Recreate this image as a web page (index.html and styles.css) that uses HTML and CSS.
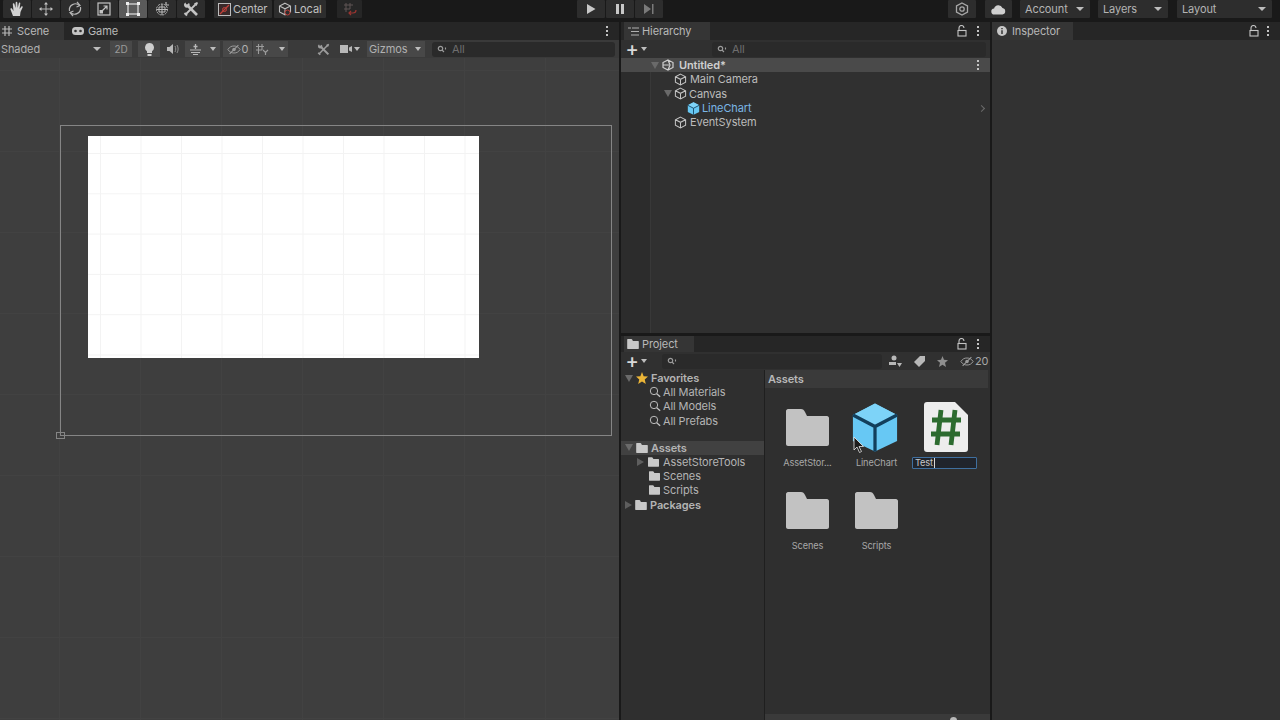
FILE: index.html
```html
<!DOCTYPE html>
<html lang="en">
<head>
  <meta charset="UTF-8" />
  <title>Unity Editor</title>
  <link rel="stylesheet" href="styles.css">
</head>
<body>

  <svg class="defs" width="0" height="0">
    <symbol id="cube" viewBox="0 0 14 14">
      <path d="M7 1.2 12.5 4v6L7 12.8 1.5 10V4zM1.5 4 7 6.8 12.5 4M7 6.8v6" fill="none" stroke="currentColor" stroke-width="1.1"/>
    </symbol>
    <symbol id="blue-cube" viewBox="0 0 50 52">
      <path d="M25 1 48 13v27L25 51 2 40V13z" fill="#67c8f4"/>
      <path d="M25 1 48 13 25 25 2 13z" fill="#7dd3f8"/>
      <path d="M2 13 25 25 48 13M25 25v26" fill="none" stroke="#123f5c" stroke-width="3.4"/>
    </symbol>
    <symbol id="folder" viewBox="0 0 43 37">
      <path d="M2 0h13c2 0 3 1 4 3l2 4h20c1 0 2 1 2 2v26c0 1-1 2-2 2H2c-1 0-2-1-2-2V2C0 1 1 0 2 0z" fill="currentColor"/>
    </symbol>
    <symbol id="search" viewBox="0 0 14 14">
      <circle cx="5.8" cy="5.8" r="4.3" fill="none" stroke="currentColor" stroke-width="1.1"/>
      <path d="M9 9l4 3.6" stroke="currentColor" stroke-width="1.4"/>
    </symbol>
    <symbol id="mini-search" viewBox="0 0 10 8">
      <circle cx="3.5" cy="3.5" r="2.2" fill="none" stroke="currentColor" stroke-width="1.2"/>
      <path d="M5 5l2 2M8.5 2.5v2" stroke="currentColor" stroke-width="1.1"/>
    </symbol>
    <symbol id="lock" viewBox="0 0 10 12">
      <path d="M2 5V3a2.5 2.5 0 0 1 5 0" fill="none" stroke="currentColor" stroke-width="1.1"/>
      <rect x="1" y="5.5" width="8" height="5.5" fill="none" stroke="currentColor" stroke-width="1.1"/>
    </symbol>
    <symbol id="eye" viewBox="0 0 16 12">
      <path d="M1 6c2-3 4-4 7-4s5 1 7 4c-2 3-4 4-7 4S3 9 1 6z" fill="none" stroke="currentColor" stroke-width="1.1"/>
      <circle cx="8" cy="6" r="2" fill="currentColor"/>
      <path d="M3 11 13 1" stroke="currentColor" stroke-width="1.2"/>
    </symbol>
    <symbol id="crosstool" viewBox="0 0 16 16">
      <path d="M5 5 14 14" stroke="currentColor" stroke-width="2.6"/>
      <path d="M2.5 1.5A3 3 0 0 0 1.5 5.5 3 3 0 0 0 5.5 6 3 3 0 0 0 6 2L4 3.5 3 3z" fill="currentColor"/>
      <path d="M12.5 3.5 3 13" stroke="currentColor" stroke-width="1.8"/>
      <path d="M11 2.5 14 1l1 1-1.5 3z" fill="currentColor"/>
      <path d="M1.5 12 4 14.5" stroke="currentColor" stroke-width="2"/>
    </symbol>
    <symbol id="hash-grid" viewBox="0 0 14 12">
      <path d="M1 3.5h8M1 7h6M3.5 1v10M7 1v6" stroke="currentColor" stroke-width="1.1" fill="none"/>
      <path d="M8 7l2.5 2.5L13 7M10.5 9.5V12" stroke="currentColor" stroke-width="1.2" fill="none"/>
    </symbol>
  </svg>

  <header class="toolbar">
    <div class="tool-group">
      <button class="tool">
        <svg width="16" height="16" viewBox="0 0 16 16"><path d="M4 15 1.5 8.5c-.4-1 1-1.600 1.600-.7L4.500 10 3.800 3c-.1-1 1.400-1.200 1.600-.2L6.500 7 6.700 1.400c0-1 1.500-1 1.600 0L8.700 7l1.100-4.800c.2-1 1.700-.7 1.500.3L10.500 8l1.700-2.300c.6-.8 1.900-.1 1.400.8L11.500 11 11 15z" fill="#d2d2d2"/></svg>
      </button>
      <button class="tool">
        <svg width="16" height="16" viewBox="0 0 16 16"><path d="M8 3v10M3 8h10" stroke="#b4b4b4" stroke-width="1"/><path d="M8 1 6 3.5h4zM8 15l-2-2.500h4zM1 8l2.500-2v4zM15 8l-2.500-2v4z" fill="#c4c4c4"/></svg>
      </button>
      <button class="tool">
        <svg width="16" height="16" viewBox="0 0 16 16" fill="none" stroke="#b5b5b5" stroke-width="1.2"><path d="M12.5 4.5A6 6 0 0 0 2.500 10M3.500 11.500a6 6 0 0 0 10-5.500"/><path d="M10 1l3 3.500L9.500 6M6 15l-3-3.500L6.500 10"/></svg>
      </button>
      <button class="tool">
        <svg width="14" height="14" viewBox="0 0 14 14" fill="none" stroke="#c4c4c4" stroke-width="1.2"><rect x="1" y="1" width="12" height="12"/><path d="M5 9 10 4M6.500 4H10v3.500"/><rect x="2.5" y="8" width="3.5" height="3.5" fill="#c4c4c4" stroke="none"/></svg>
      </button>
      <button class="tool tool-on">
        <svg width="14" height="14" viewBox="0 0 14 14"><rect x="2" y="2" width="10" height="10" fill="none" stroke="#eee" stroke-width="1.1"/><path d="M0 0h3v3H0zM11 0h3v3h-3zM0 11h3v3H0zM11 11h3v3h-3z" fill="#eee"/></svg>
      </button>
      <button class="tool">
        <svg width="16" height="16" viewBox="0 0 16 16" fill="none" stroke="#bcbcbc"><circle cx="8" cy="8.5" r="5.5" stroke-dasharray="2 1"/><path d="M8 3v11M2.500 8.500h11"/><path d="M5 6h6v5H5z"/><path d="M12 1v3h3" stroke-width="1.2"/></svg>
      </button>
      <button class="tool">
        <svg class="ico-light" width="16" height="16"><use href="#crosstool"/></svg>
      </button>
    </div>

    <div class="tool-group pivot-group">
      <button class="tool tool-text">
        <svg width="13" height="13" viewBox="0 0 13 13"><rect x=".5" y=".5" width="12" height="12" fill="#3a2a2a" stroke="#bdbdbd"/><path d="M2 11 11 2" stroke="#c0403a" stroke-width="1.3"/><circle cx="6.5" cy="6.5" r="2" fill="none" stroke="#c0403a"/></svg>
        Center
      </button>
      <button class="tool tool-text">
        <svg width="14" height="14" viewBox="0 0 14 14"><use href="#cube" color="#bdbdbd"/><circle cx="9.5" cy="10.5" r="2.5" fill="#2e2e2e" stroke="#c0403a"/></svg>
        Local
      </button>
    </div>

    <button class="tool snap">
      <svg width="14" height="14" viewBox="0 0 14 14" fill="none"><path d="M3 1v9M7 1v6M1 3h9M1 7h6" stroke="#5f5555"/><path d="M13 8a3 3 0 0 1-3 3H6M8 9l-2 2 2 2" stroke="#9a3430" stroke-width="1.2"/></svg>
    </button>

    <div class="play-group">
      <button class="tool"><svg width="10" height="10" viewBox="0 0 10 10"><path d="M1 0 9.5 5 1 10z" fill="#c8c8c8"/></svg></button>
      <button class="tool"><svg width="10" height="10" viewBox="0 0 10 10"><path d="M1 0h3v10H1zM6 0h3v10H6z" fill="#c8c8c8"/></svg></button>
      <button class="tool"><svg width="10" height="10" viewBox="0 0 10 10"><path d="M0 0 7 5 0 10zM8 0h1.500v10H8z" fill="#7a7a7a"/></svg></button>
    </div>

    <div class="right-group">
      <button class="tool">
        <svg width="14" height="14" viewBox="0 0 14 14" fill="none" stroke="#a8a8a8" stroke-width="1.3"><path d="M7 1 12.5 4v6L7 13 1.5 10V4z"/><circle cx="7" cy="7" r="2.2"/></svg>
      </button>
      <button class="tool">
        <svg width="15" height="11" viewBox="0 0 15 11"><path d="M3.500 10.500a3 3 0 0 1-.4-6A4.500 4.500 0 0 1 11.500 4a3.300 3.300 0 0 1 0 6.500z" fill="#d0d0d0"/></svg>
      </button>
      <button class="drop drop-account">Account<i class="caret"></i></button>
      <button class="drop drop-layers">Layers<i class="caret"></i></button>
      <button class="drop drop-layout">Layout<i class="caret"></i></button>
    </div>
  </header>

  <main class="editor">

    <section class="scene-panel">
      <div class="tabs">
        <div class="tab tab-on tab-scene">
          <svg width="10" height="10" viewBox="0 0 10 10"><path d="M3 0v10M7 0v10M0 3h10M0 7h10" stroke="#b8b8b8" stroke-width="1.2"/></svg>
          Scene
        </div>
        <div class="tab">
          <svg width="12" height="8" viewBox="0 0 12 8"><rect y="0" width="12" height="8" rx="3.5" fill="#c4c4c4"/><circle cx="3.5" cy="4" r="1.3" fill="#333"/><circle cx="8.5" cy="4" r="1.3" fill="#333"/></svg>
          Game
        </div>
        <span class="kebab tabs-kebab"></span>
      </div>

      <div class="scene-tools">
        <div class="shaded">Shaded<i class="caret"></i></div>
        <span class="st-btn st-2d">2D</span>
        <span class="st-btn st-light"><svg width="9" height="13" viewBox="0 0 9 13"><path d="M4.500 0a4.500 4.500 0 0 1 2.500 8.200V10H2V8.200A4.500 4.500 0 0 1 4.500 0zM2.500 11h4v2h-4z" fill="#cfcfcf"/></svg></span>
        <span class="st-btn st-audio"><svg width="12" height="10" viewBox="0 0 12 10"><path d="M0 3h2.500L6 0v10L2.500 7H0z" fill="#b8b8b8"/><path d="M8 2c1 2 1 4 0 6M10 1c1.500 2.500 1.500 5.500 0 8" stroke="#8c8c8c" fill="none"/></svg></span>
        <span class="st-btn st-fx">
          <svg width="13" height="11" viewBox="0 0 13 11"><path d="M1 6h11M2 8.500h9M4 10.500h5" stroke="#b8b8b8"/><path d="M6.500 0v5M4.500 2.500h4" stroke="#b8b8b8" stroke-width="1.3"/></svg>
          <i class="caret"></i>
        </span>
        <span class="st-btn st-hidden"><svg class="ico-mid" width="14" height="11"><use href="#eye"/></svg>0</span>
        <span class="st-btn st-grid">
          <svg class="ico-mid" width="14" height="12"><use href="#hash-grid"/></svg>
          <i class="caret"></i>
        </span>
        <span class="st-btn st-cross"><svg class="ico-mid" width="13" height="13"><use href="#crosstool"/></svg></span>
        <span class="st-btn st-cam">
          <svg width="12" height="8" viewBox="0 0 12 8"><path d="M0 0h8v8H0zM9 2.500 12 1v6L9 5.500z" fill="#b8b8b8"/></svg>
          <i class="caret"></i>
        </span>
        <span class="st-btn st-gizmos">Gizmos<i class="caret"></i></span>
        <div class="search scene-search">
          <svg class="ico-mid" width="10" height="8"><use href="#mini-search"/></svg>
          All
        </div>
      </div>

      <div class="viewport">
        <div class="canvas-frame"></div>
        <div class="game-rect"></div>
      </div>
    </section>

    <div class="middle-col">
      <section class="hierarchy-panel">
        <div class="tabs">
          <div class="tab tab-on tab-hier">
            <svg width="11" height="9" viewBox="0 0 11 9"><path d="M0 1h3M4 1h7M3 4.500h8M3 8h8" stroke="#b0b0b0"/></svg>
            Hierarchy
          </div>
          <svg class="ico-light tab-lock" width="10" height="12"><use href="#lock"/></svg>
          <span class="kebab"></span>
        </div>
        <div class="panel-tools">
          <span class="plus">+</span><i class="caret"></i>
          <div class="search hier-search">
            <svg class="ico-mid" width="10" height="8"><use href="#mini-search"/></svg>
            All
          </div>
        </div>
        <div class="tree">
          <div class="tree-row scene-row">
            <i class="arrow-down dim"></i>
            <svg width="12" height="12" viewBox="0 0 12 12" fill="none" stroke="#d0d0d0" stroke-width="1.2"><path d="M6 1 11 3.500v5L6 11 1 8.500v-5zM1 6h6M6 1l2 5-2 5"/></svg>
            <b>Untitled*</b>
            <span class="kebab row-kebab"></span>
          </div>
          <div class="tree-row depth-1"><svg class="ico-light" width="13" height="13"><use href="#cube"/></svg>Main Camera</div>
          <div class="tree-row depth-1 has-arrow"><i class="arrow-down dim"></i><svg class="ico-light" width="13" height="13"><use href="#cube"/></svg>Canvas</div>
          <div class="tree-row depth-2 prefab">
            <svg width="13" height="13" viewBox="0 0 50 52"><use href="#blue-cube"/></svg>LineChart
            <span class="chev"></span>
          </div>
          <div class="tree-row depth-1"><svg class="ico-light" width="13" height="13"><use href="#cube"/></svg>EventSystem</div>
        </div>
      </section>

      <section class="project-panel">
        <div class="tabs">
          <div class="tab tab-on tab-project">
            <svg class="ico-folder" width="12" height="10"><use href="#folder"/></svg>
            Project
          </div>
          <svg class="ico-light tab-lock" width="10" height="12"><use href="#lock"/></svg>
          <span class="kebab"></span>
        </div>
        <div class="panel-tools">
          <span class="plus">+</span><i class="caret"></i>
          <div class="search project-search">
            <svg class="ico-mid" width="10" height="8"><use href="#mini-search"/></svg>
          </div>
          <div class="filter-icons">
            <svg width="13" height="13" viewBox="0 0 13 13"><circle cx="5" cy="3" r="2.500" fill="#b8b8b8"/><path d="M0 7h7v3H0zM8 8l2.500 4L13 8z" fill="#b8b8b8"/></svg>
            <svg width="11" height="11" viewBox="0 0 11 11"><path d="M6 0h5v5l-6 6-5-5z" fill="#b8b8b8"/></svg>
            <svg width="11" height="11" viewBox="0 0 11 11"><path d="M5.500 0 7 3.800 11 4.200 8 6.800 9 11 5.500 8.800 2 11l1-4.200-3-2.600 4-.4z" fill="#8e8e8e"/></svg>
            <span class="hidden-count"><svg class="ico-mid" width="14" height="11"><use href="#eye"/></svg>20</span>
          </div>
        </div>

        <div class="project-body">
          <aside class="project-tree">
            <div class="ptree-row root"><i class="arrow-down dim"></i><svg width="12" height="12" viewBox="0 0 11 11"><path d="M5.500 0 7 3.800 11 4.200 8 6.800 9 11 5.500 8.800 2 11l1-4.200-3-2.600 4-.4z" fill="#eab437"/></svg><b>Favorites</b></div>
            <div class="ptree-row fav"><svg class="ico-light" width="12" height="12"><use href="#search"/></svg>All Materials</div>
            <div class="ptree-row fav"><svg class="ico-light" width="12" height="12"><use href="#search"/></svg>All Models</div>
            <div class="ptree-row fav"><svg class="ico-light" width="12" height="12"><use href="#search"/></svg>All Prefabs</div>
            <div class="ptree-gap"></div>
            <div class="ptree-row root selected"><i class="arrow-down dim"></i><svg class="ico-folder" width="12" height="10"><use href="#folder"/></svg><b>Assets</b></div>
            <div class="ptree-row sub"><i class="arrow-right"></i><svg class="ico-folder" width="11" height="10"><use href="#folder"/></svg>AssetStoreTools</div>
            <div class="ptree-row sub no-arrow"><svg class="ico-folder" width="11" height="10"><use href="#folder"/></svg>Scenes</div>
            <div class="ptree-row sub no-arrow"><svg class="ico-folder" width="11" height="10"><use href="#folder"/></svg>Scripts</div>
            <div class="ptree-row root"><i class="arrow-right"></i><svg class="ico-folder" width="12" height="10"><use href="#folder"/></svg><b>Packages</b></div>
          </aside>

          <div class="assets">
            <div class="assets-head">Assets</div>
            <div class="asset-grid">
              <div class="asset">
                <svg class="asset-folder" width="43" height="37"><use href="#folder"/></svg>
                <span>AssetStor...</span>
              </div>
              <div class="asset">
                <svg class="asset-cube" width="48" height="51" viewBox="0 0 50 52"><use href="#blue-cube"/></svg>
                <span>LineChart</span>
              </div>
              <div class="asset">
                <svg class="asset-script" width="44" height="50" viewBox="0 0 44 50">
                  <path d="M3 0h28l13 13v34c0 2-1 3-3 3H3c-2 0-3-1-3-3V3c0-2 1-3 3-3z" fill="#ededed"/>
                  <path d="M17 8l-4 35M31 8l-4 35M8 18h29M7 32h29" stroke="#2c6b2f" stroke-width="4.8" fill="none"/>
                </svg>
                <div class="rename"><span>Test</span></div>
              </div>
              <div class="asset">
                <svg class="asset-folder" width="43" height="37"><use href="#folder"/></svg>
                <span>Scenes</span>
              </div>
              <div class="asset">
                <svg class="asset-folder" width="43" height="37"><use href="#folder"/></svg>
                <span>Scripts</span>
              </div>
            </div>
            <div class="assets-foot"><i class="size-knob"></i></div>
            <svg class="cursor" width="11" height="16" viewBox="0 0 11 16"><path d="M1 0v13l3-3 2.500 5.500 2-1L6 9.500h4.500z" fill="#1c1c1c" stroke="#e8e8e8" stroke-width=".8"/></svg>
          </div>
        </div>
      </section>
    </div>

    <section class="inspector-panel">
      <div class="tabs">
        <div class="tab tab-on tab-insp">
          <svg width="10" height="10" viewBox="0 0 10 10"><circle cx="5" cy="5" r="5" fill="#c8c8c8"/><path d="M5 2v1.300M5 4.300V8" stroke="#2c2c2c" stroke-width="1.4"/></svg>
          Inspector
        </div>
        <svg class="ico-light tab-lock" width="10" height="12"><use href="#lock"/></svg>
        <span class="kebab"></span>
      </div>
    </section>

  </main>

</body>
</html>
```

FILE: styles.css
```css
* {
  box-sizing: border-box;
}

body {
  margin: 0;
  width: 1280px;
  height: 720px;
  overflow: hidden;
  background: #191919;
  color: #bdbdbd;
  font-family: Inter, "Liberation Sans", sans-serif;
  font-size: 11px;
  letter-spacing: -.1px;
  display: flex;
  flex-direction: column;
}

button {
  font: inherit;
  letter-spacing: inherit;
  color: inherit;
  border: 0;
  padding: 0;
}

svg {
  display: block;
  flex: none;
}

.defs {
  position: absolute;
}

.ico-light { color: #c4c4c4; }
.ico-mid { color: #9c9c9c; }
.ico-folder { color: #c8c8c8; }

.caret {
  display: inline-block;
  width: 0;
  height: 0;
  border-left: 4px solid transparent;
  border-right: 4px solid transparent;
  border-top: 4px solid #bdbdbd;
}

.kebab {
  width: 2px;
  height: 2px;
  background: #c4c4c4;
  box-shadow: 0 -4px 0 #c4c4c4, 0 4px 0 #c4c4c4;
}

/* top toolbar */
.toolbar {
  height: 22px;
  flex: none;
  display: flex;
  align-items: flex-start;
  padding: 0 8px 0 3px;
  background: #191919;
}

.tool-group {
  display: flex;
  gap: 1px;
}

.tool {
  width: 28px;
  height: 18px;
  background: #2d2d2d;
  display: flex;
  align-items: center;
  justify-content: center;
  border-radius: 1px;
}

.tool-on {
  background: #5a5a5a;
}

.tool-text {
  justify-content: flex-start;
  gap: 2px;
  padding: 0 4px;
  color: #c0c0c0;
}

.pivot-group {
  margin-left: 9px;
  gap: 2px;
}

.pivot-group .tool:first-child { width: 58px; }
.pivot-group .tool:last-child { width: 52px; }

.snap {
  margin-left: 11px;
  width: 25px;
  background: #262626;
}

.play-group {
  display: flex;
  margin-left: 215px;
  gap: 1px;
}

.right-group {
  display: flex;
  margin-left: auto;
}

.right-group .tool:first-child { margin-right: 9px; }
.right-group .tool:nth-child(2) { width: 27px; margin-right: 8px; }

.drop {
  height: 18px;
  background: #2d2d2d;
  display: flex;
  align-items: center;
  justify-content: space-between;
  padding: 0 6px 0 5px;
  color: #b4b4b4;
  border-radius: 1px;
}

.drop-account { width: 70px; margin-right: 8px; }
.drop-layers { width: 70px; margin-right: 9px; }
.drop-layout { width: 95px; }

/* panels */
.editor {
  flex: 1;
  display: flex;
  min-height: 0;
}

.scene-panel {
  width: 619px;
  display: flex;
  flex-direction: column;
}

.middle-col {
  width: 369px;
  margin-left: 2px;
  display: flex;
  flex-direction: column;
}

.inspector-panel {
  flex: 1;
  margin-left: 2px;
  background: #323232;
}

.tabs {
  height: 18px;
  flex: none;
  display: flex;
  align-items: center;
  background: #262626;
}

.tab {
  height: 18px;
  display: flex;
  align-items: center;
  gap: 5px;
  padding-left: 2px;
  color: #b8b8b8;
}

.tab-on {
  background: #353535;
}

.tab-scene { width: 64px; }
.tab-scene + .tab { padding-left: 8px; gap: 4px; }

.tabs-kebab {
  margin-left: auto;
  margin-right: 12px;
}

.tab-hier { width: 86px; margin-left: 3px; padding-left: 4px; gap: 3px; }
.tab-project { width: 70px; margin-left: 3px; padding-left: 3px; gap: 3px; }
.tab-insp { width: 81px; padding-left: 5px; gap: 5px; }

.tab-lock {
  margin-left: auto;
  margin-right: 8px;
}

.middle-col .tab-lock {
  margin-right: 10px;
}

.tabs > .kebab:last-child {
  margin-right: 11px;
}

/* scene toolbar */
.scene-tools {
  height: 18px;
  flex: none;
  display: flex;
  align-items: center;
  background: #3a3a3a;
  color: #b0b0b0;
}

.shaded {
  width: 105px;
  display: flex;
  align-items: center;
  justify-content: space-between;
  padding-left: 1px;
  padding-right: 4px;
  margin-right: 5px;
}

.st-btn {
  height: 16px;
  display: flex;
  align-items: center;
  justify-content: center;
  background: #484848;
  gap: 5px;
}

.st-btn .caret { border-width: 4px 3.5px 0; }

.st-2d { width: 22px; font-size: 10px; margin-right: 6px; color: #9a9a9a; }
.st-light { width: 22px; }
.st-audio { width: 19px; margin-left: 3px; background: transparent; }
.st-fx { width: 35px; margin-left: 3px; justify-content: space-between; padding: 0 4px; }
.st-hidden { width: 29px; margin-left: 3px; gap: 1px; }
.st-grid { width: 35px; margin-left: 1px; justify-content: space-between; padding: 0 3px 0 2px; }
.st-cross { width: 20px; margin-left: 25px; background: transparent; }
.st-cam { width: 30px; margin-left: 2px; background: transparent; gap: 2px; }
.st-gizmos { width: 58px; margin-left: 2px; justify-content: space-between; padding: 0 4px 0 2px; }

.search {
  height: 15px;
  display: flex;
  align-items: center;
  gap: 5px;
  background: #2a2a2a;
  border-radius: 3px;
  color: #6e6e6e;
  padding-left: 5px;
}

.scene-search {
  width: 183px;
  margin-left: 7px;
}

.viewport {
  flex: 1;
  position: relative;
  background-color: #3e3e3e;
  background-image:
    linear-gradient(to right, #424242 1px, transparent 1px),
    linear-gradient(to bottom, #424242 1px, transparent 1px);
  background-size: 81px 81px;
  background-position: 59px 12px;
}

.canvas-frame {
  position: absolute;
  left: 60px;
  top: 67px;
  width: 552px;
  height: 311px;
  border: 1px solid #858585;
}

.canvas-frame::after {
  content: "";
  position: absolute;
  left: -5px;
  bottom: -4px;
  width: 7px;
  height: 5px;
  border: 1px solid #858585;
}

.game-rect {
  position: absolute;
  left: 88px;
  top: 78px;
  width: 391px;
  height: 222px;
  background-color: #fff;
  background-image:
    linear-gradient(to right, #f3f3f3 1px, transparent 1px),
    linear-gradient(to bottom, #f3f3f3 1px, transparent 1px);
  background-size: 40.5px 40.3px;
  background-position: 12px 17px;
}

/* hierarchy */
.hierarchy-panel {
  height: 311px;
  flex: none;
  display: flex;
  flex-direction: column;
  background: #2f2f2f;
}

.panel-tools {
  height: 18px;
  flex: none;
  display: flex;
  align-items: center;
  background: #303030;
  padding-left: 4px;
}

.plus {
  width: 14px;
  font-size: 20px;
  line-height: 16px;
  font-weight: 500;
  color: #d8d8d8;
  text-align: center;
  margin-right: 2px;
}

.panel-tools .caret { border-width: 4px 3.5px 0; }

.hier-search {
  width: 274px;
  margin-left: 65px;
}

.tree {
  flex: 1;
  background: linear-gradient(to right, #2c2c2c 29px, #383838 29px, #383838 30px, #303030 30px);
  color: #bcbcbc;
}

.tree-row {
  height: 14.3px;
  display: flex;
  align-items: center;
  white-space: nowrap;
}

.tree-row b {
  font-weight: 600;
}

.scene-row {
  background: #4a4a4a;
  padding-left: 30px;
  gap: 3px;
  color: #cfcfcf;
}

.scene-row b { margin-left: 2px; }

.row-kebab {
  margin-left: auto;
  margin-right: 11px;
}

.depth-1 { padding-left: 53px; gap: 3px; }
.depth-1.has-arrow { padding-left: 43px; gap: 2px; }
.depth-2 { padding-left: 66px; gap: 2px; }

.prefab {
  color: #7ab6e6;
}

.chev {
  width: 5px;
  height: 5px;
  border-top: 1px solid #6a6a6a;
  border-right: 1px solid #6a6a6a;
  transform: rotate(45deg);
  margin-left: auto;
  margin-right: 6px;
}

.arrow-down {
  width: 0;
  height: 0;
  border-left: 4px solid transparent;
  border-right: 4px solid transparent;
  border-top: 7px solid #6a6a6a;
  flex: none;
}

.arrow-right {
  width: 0;
  height: 0;
  border-top: 4px solid transparent;
  border-bottom: 4px solid transparent;
  border-left: 7px solid #5e5e5e;
  flex: none;
}

/* project */
.project-panel {
  flex: 1;
  min-height: 0;
  display: flex;
  flex-direction: column;
  border-top: 3px solid #191919;
  background: #2f2f2f;
}

.project-panel .tabs,
.project-panel .tab {
  height: 16px;
}

.project-search {
  width: 220px;
  margin-left: 15px;
}

.filter-icons {
  margin-left: 7px;
  display: flex;
  align-items: center;
  gap: 12px;
}

.hidden-count {
  display: flex;
  align-items: center;
  gap: 1px;
  color: #a8a8a8;
}

.project-body {
  flex: 1;
  display: flex;
  min-height: 0;
}

.project-tree {
  width: 144px;
  padding-top: 1px;
  border-right: 1px solid #1f1f1f;
  color: #b4b4b4;
}

.ptree-row {
  height: 14.2px;
  display: flex;
  align-items: center;
  gap: 3px;
  white-space: nowrap;
}

.ptree-row b {
  font-weight: 600;
}

.root { padding-left: 4px; }
.fav { padding-left: 28px; gap: 2px; }
.sub { padding-left: 16px; gap: 4px; }
.sub.no-arrow { padding-left: 28px; gap: 3px; }

.ptree-gap {
  height: 13px;
}

.selected {
  background: #414141;
}

.assets {
  flex: 1;
  display: flex;
  flex-direction: column;
  position: relative;
  min-width: 0;
}

.assets-head {
  height: 18px;
  flex: none;
  background: #3a3a3a;
  margin-right: 2px;
  padding-left: 3px;
  display: flex;
  align-items: center;
  font-weight: 600;
  color: #b8b8b8;
}

.asset-grid {
  flex: 1;
  display: grid;
  grid-template-columns: repeat(3, 69px);
  grid-auto-rows: 83px;
  padding: 14px 0 0 8px;
}

.asset {
  display: flex;
  flex-direction: column;
  align-items: center;
  font-size: 9.2px;
  color: #a8a8a8;
}

.asset-folder {
  color: #c2c2c2;
  margin: 7px 0 11px;
}

.asset-cube { margin: 0 0 4px -3px; }
.asset-script { margin-bottom: 5px; }

.asset > span {
  line-height: 12px;
}

.rename {
  width: 65px;
  height: 12px;
  line-height: 10px;
  margin-left: -2px;
  padding-left: 2px;
  background: #20242c;
  border: 1px solid #3f6f9f;
  border-radius: 1px;
  color: #c8c8c8;
}

.rename span {
  display: inline-block;
  padding-right: 1px;
  border-right: 1px solid #d8d8d8;
}

.assets-foot {
  height: 6px;
  flex: none;
  background: #3a3a3a;
  position: relative;
  overflow: hidden;
}

.size-knob {
  position: absolute;
  left: 185px;
  top: 3px;
  width: 7px;
  height: 7px;
  border-radius: 50%;
  background: #b8b8b8;
}

.cursor {
  position: absolute;
  left: 88px;
  top: 67px;
}
```
